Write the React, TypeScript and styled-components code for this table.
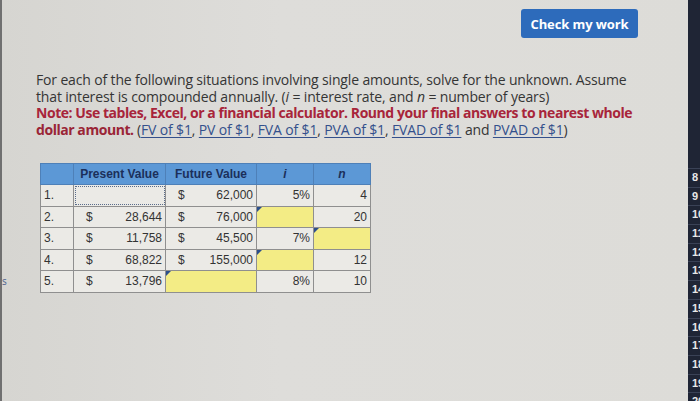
import React from "react";
import styled, { createGlobalStyle } from "styled-components";

const Global = createGlobalStyle`
  html, body { margin: 0; padding: 0; }
  body { background: #dcdbd7; font-family: "Open Sans", "Liberation Sans", sans-serif; }
`;

const Page = styled.div`
  width: 700px;
  height: 401px;
  display: flex;
  overflow: hidden;
  background: linear-gradient(90deg, #d6d5d1 0%, #dedddA 40%, #dddcd8 100%);
`;

const Main = styled.div`
  flex: 1;
  border-left: 2px solid #707070;
  display: flex;
  flex-direction: column;
  position: relative;
`;

const TopBar = styled.div`
  display: flex;
  justify-content: flex-end;
  padding: 9px 50px 0 0;
  height: 37px;
  box-sizing: border-box;
`;

const CheckButton = styled.button`
  width: 117px;
  height: 29px;
  border: none;
  border-radius: 3px;
  background: #2d6bbb;
  color: #fff;
  font-family: "Open Sans", sans-serif;
  font-weight: 700;
  font-size: 13px;
  letter-spacing: -0.1px;
  padding: 0;
`;

const Question = styled.div`
  width: 602px;
  padding: 35px 0 0 34px;
  font-size: 14px;
  line-height: 16.5px;
  color: #353535;
  letter-spacing: -0.15px;
`;

const Note = styled.span`
  color: #a8253a;
  font-weight: 700;
  letter-spacing: -0.45px;
`;

const Lead = styled.span`
  font-weight: 700;
  letter-spacing: -0.45px;
  color: #9a2536;
`;

const Link = styled.span`
  color: #34508c;
  text-decoration: underline;
  text-underline-offset: 2px;
`;

const TableWrap = styled.div`
  padding: 25px 0 0 38px;
`;

const Table = styled.table`
  border-collapse: collapse;
  font-family: "Liberation Sans", Arial, sans-serif;
  font-size: 12px;
  color: #333;
  border: 1px solid #8c8c8c;
`;

const Th = styled.th<{ $w: number; $italic?: boolean }>`
  width: ${(p) => p.$w}px;
  height: 20px;
  padding: 0;
  background: #5c98d6;
  color: #1b2f5a;
  font-weight: 700;
  font-style: ${(p) => (p.$italic ? "italic" : "normal")};
  border: 1px solid #4e80b8;
  text-align: center;
`;

const Td = styled.td<{ $yellow?: boolean; $dotted?: boolean; $marker?: boolean }>`
  height: 21.5px;
  padding: 0 3px;
  background: ${(p) => (p.$yellow ? "#f3ec85" : "#ebeae6")};
  border: 1px solid #8f8f8f;
  ${(p) => (p.$dotted ? "outline: 1px dotted #5a6c8a; outline-offset: -2px;" : "")}
  position: relative;
  box-sizing: border-box;
  &::before {
    content: "";
    display: ${(p) => (p.$marker ? "block" : "none")};
    position: absolute;
    left: 0;
    top: 0;
    border-style: solid;
    border-width: 5px 5px 0 0;
    border-color: #2c4f8c transparent transparent transparent;
  }
`;

const Money = styled.div`
  display: flex;
  justify-content: space-between;
  padding-left: 9px;
`;

const Num = styled.div`
  text-align: right;
`;

const Side = styled.div`
  width: 12px;
  background: #1f2535;
  display: flex;
  flex-direction: column;
  padding-top: 168px;
  overflow: hidden;
`;

const SideNum = styled.div`
  height: 17.7px;
  flex-shrink: 0;
  border-top: 1px solid #3a4256;
  color: #e8e8e8;
  font-family: "Liberation Sans", sans-serif;
  font-weight: 700;
  font-size: 11px;
  line-height: 17px;
  padding-left: 4px;
  white-space: nowrap;
`;

const EdgeMark = styled.span`
  position: absolute;
  left: 0;
  top: 274px;
  font-size: 10px;
  color: #4c5f8c;
`;

type Row = {
  n: string;
  pv?: string;
  fv?: string;
  i?: string;
  years?: string;
  yellow?: "pv" | "fv" | "i" | "n";
};

const rows: Row[] = [
  { n: "1.", fv: "62,000", i: "5%", years: "4" },
  { n: "2.", pv: "28,644", fv: "76,000", years: "20", yellow: "i" },
  { n: "3.", pv: "11,758", fv: "45,500", i: "7%", yellow: "n" },
  { n: "4.", pv: "68,822", fv: "155,000", years: "12", yellow: "i" },
  { n: "5.", pv: "13,796", i: "8%", years: "10", yellow: "fv" },
];

export default function App() {
  return (
    <>
      <Global />
      <Page>
        <Main>
          <EdgeMark>s</EdgeMark>
          <TopBar>
            <CheckButton>Check my work</CheckButton>
          </TopBar>
          <Question>
            For each of the following situations involving single amounts, solve for the unknown. Assume
            that interest is compounded annually. (<i>i</i> = interest rate, and <i>n</i> = number of years)
            <br />
            <Note>
              Note: Use tables, Excel, or a financial calculator. Round your final answers to nearest whole
            </Note>
            <br />
            <Lead>dollar amount.</Lead> (<Link>FV of $1</Link>, <Link>PV of $1</Link>, <Link>FVA of $1</Link>,{" "}
            <Link>PVA of $1</Link>, <Link>FVAD of $1</Link> and <Link>PVAD of $1</Link>)
          </Question>
          <TableWrap>
            <Table>
              <thead>
                <tr>
                  <Th $w={32}></Th>
                  <Th $w={91}>Present Value</Th>
                  <Th $w={90}>Future Value</Th>
                  <Th $w={56} $italic>i</Th>
                  <Th $w={56} $italic>n</Th>
                </tr>
              </thead>
              <tbody>
                {rows.map((r) => (
                  <tr key={r.n}>
                    <Td>{r.n}</Td>
                    <Td $dotted={r.n === "1."}>
                      {r.pv && (
                        <Money>
                          <span>$</span>
                          <span>{r.pv}</span>
                        </Money>
                      )}
                    </Td>
                    <Td $yellow={r.yellow === "fv"} $marker={r.yellow === "fv"}>
                      {r.fv && (
                        <Money>
                          <span>$</span>
                          <span>{r.fv}</span>
                        </Money>
                      )}
                    </Td>
                    <Td $yellow={r.yellow === "i"} $marker={r.yellow === "i"}>
                      <Num>{r.i}</Num>
                    </Td>
                    <Td $yellow={r.yellow === "n"} $marker={r.yellow === "n"}>
                      <Num>{r.years}</Num>
                    </Td>
                  </tr>
                ))}
              </tbody>
            </Table>
          </TableWrap>
        </Main>
        <Side>
          {["8", "9", "10", "11", "12", "13", "14", "15", "16", "17", "18", "19", "20"].map((s) => (
            <SideNum key={s}>{s}</SideNum>
          ))}
        </Side>
      </Page>
    </>
  );
}
